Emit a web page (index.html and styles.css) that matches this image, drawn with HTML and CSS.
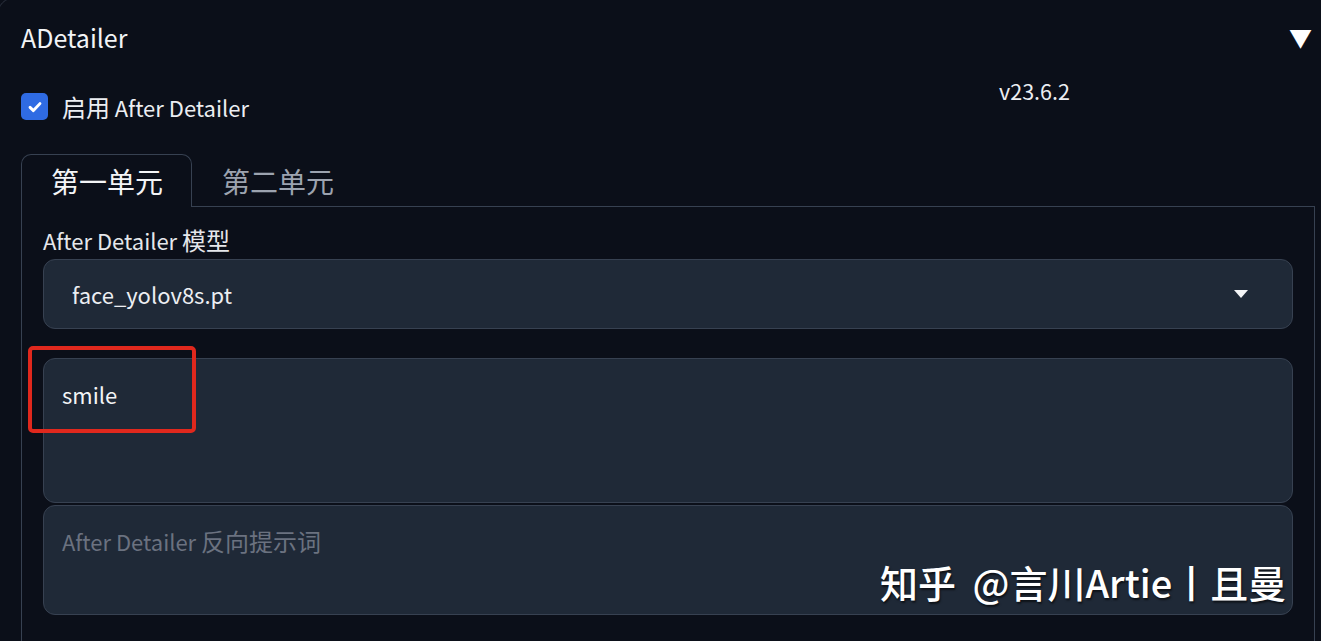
FILE: index.html
```html
<!DOCTYPE html>
<html lang="zh-CN">
<head>
    <meta charset="UTF-8">
    <meta name="viewport" content="width=device-width, initial-scale=1.0">
    <title>ADetailer</title>
    <link rel="stylesheet" href="styles.css">
</head>
<body>
    <div class="panel">
        <!-- Заголовок аккордеона -->
        <div class="panel-head">
            <span class="panel-title">ADetailer</span>
            <span class="panel-toggle">▼</span>
        </div>

        <div class="enable-row">
            <label class="check">
                <span class="check-box">
                    <svg width="18" height="18" viewBox="0 0 16 16">
                        <path d="M3.6 8.3 L6.6 11.2 L12.4 5.0" fill="none" stroke="#fff" stroke-width="2.6" stroke-linecap="round" stroke-linejoin="round"/>
                    </svg>
                </span>
                <span class="check-text"><span class="zh">启用</span> After Detailer</span>
            </label>
            <span class="version">v23.6.2</span>
        </div>

        <!-- Вкладки -->
        <div class="tabs">
            <div class="tab active">第一单元</div>
            <div class="tab">第二单元</div>
        </div>

        <div class="tab-body">
            <div class="field-label">After Detailer <span class="zh">模型</span></div>
            <div class="select">
                <span>face_yolov8s.pt</span>
                <span class="select-arrow"></span>
            </div>

            <div class="prompt">
                <div class="text-box pos">smile</div>
                <div class="highlight"></div>
                <div class="text-box neg placeholder">After Detailer <span class="zh">反向提示词</span></div>
                <div class="watermark">知乎 @言川Artie丨且曼</div>
            </div>
        </div>
    </div>
</body>
</html>
```

FILE: styles.css
```css
body {
    background: #0b0f19;
    color: #e5e7eb;
    font-family: "Noto Sans CJK SC", "Noto Sans", sans-serif;
    margin: 0;
    overflow: hidden;
}
.zh {
    font-size: 1.09em;
}
.panel {
    margin: -3px -20px 0 -3px;
    border: 1px solid #2d3340;
    border-radius: 18px;
    padding: 3px 25px 0 23px;
    height: 700px;
}
.panel-head {
    display: flex;
    justify-content: space-between;
    align-items: center;
    height: 72px;
    padding-bottom: 2px;
}
.panel-title {
    font-size: 25px;
    color: #f3f4f6;
}
.panel-toggle {
    font-size: 23px;
    color: #fff;
    margin-right: 3px;
}
.enable-row {
    display: flex;
    align-items: center;
    height: 63px;
}
.check {
    display: flex;
    align-items: center;
    gap: 14px;
    width: 978px;
}
.check-box {
    width: 27px;
    height: 27px;
    border-radius: 5px;
    background: #2f6be3;
    display: flex;
    align-items: center;
    justify-content: center;
}
.check-text {
    font-size: 22px;
    color: #eceef2;
}
.version {
    font-size: 21.5px;
    color: #eceef2;
    align-self: flex-start;
    margin-top: 0;
}
.tabs {
    display: flex;
    margin-top: 16px;
    position: relative;
    z-index: 1;
}
.tab {
    font-size: 28px;
    color: #9ca3af;
    height: 52px;
    line-height: 52px;
    padding: 0 28px 0 29px;
    border: 1px solid transparent;
    border-bottom: none;
    border-radius: 10px 10px 0 0;
}
.tab.active {
    color: #f3f4f6;
    border-color: #374151;
    background: #0b0f19;
}
.tab-body {
    border: 1px solid #374151;
    margin-top: -1px;
    padding: 14px 21px 0 21px;
    height: 500px;
}
.field-label {
    font-size: 22px;
    color: #e5e7eb;
    line-height: 38px;
}
.select {
    height: 68px;
    background: #1f2937;
    border: 1px solid #374151;
    border-radius: 12px;
    display: flex;
    align-items: center;
    justify-content: space-between;
    padding: 0 44px 0 28px;
    font-size: 22px;
    color: #eceef2;
}
.select-arrow {
    width: 0;
    height: 0;
    border-left: 7px solid transparent;
    border-right: 7px solid transparent;
    border-top: 8px solid #f3f4f6;
}
.prompt {
    position: relative;
    margin-top: 29px;
}
.text-box {
    background: #1f2937;
    border: 1px solid #374151;
    font-size: 22px;
    padding: 18px 18px;
    line-height: 34px;
}
.text-box.pos {
    height: 107px;
    border-radius: 12px;
    color: #f3f4f6;
}
.text-box.neg {
    height: 72px;
    margin-top: 2px;
    border-radius: 12px;
}
.placeholder {
    color: #6b7280;
}
.highlight {
    position: absolute;
    left: -15px;
    top: -12px;
    width: 160px;
    height: 79px;
    border: 4px solid #e0281d;
    border-radius: 5px;
}
.watermark {
    position: absolute;
    left: 837px;
    top: 196px;
    font-size: 38px;
    color: #fff;
    font-weight: 500;
    word-spacing: 8px;
    text-shadow: 1px 2px 2px rgba(0, 0, 0, 0.6);
    white-space: nowrap;
}
```
